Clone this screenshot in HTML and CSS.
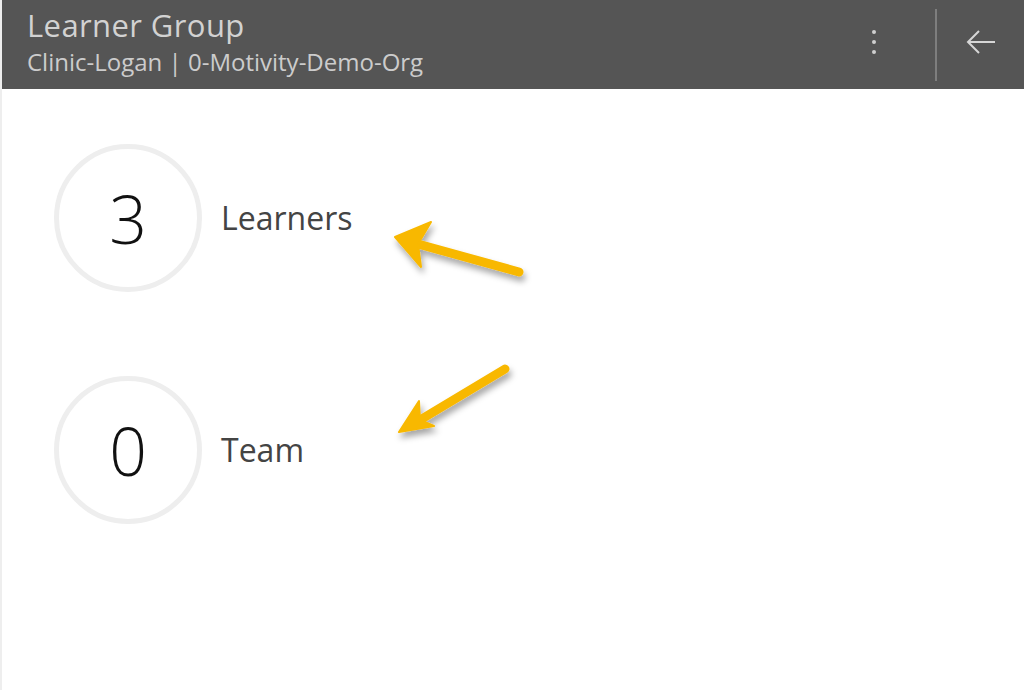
FILE: index.html
```html
<!DOCTYPE html>
<html lang="en">
<head>
    <meta charset="UTF-8">
    <meta name="viewport" content="width=device-width, initial-scale=1.0">
    <title>Learner Group</title>
    <link rel="stylesheet" href="styles.css">
</head>
<body>
    <div class="app">
        <header class="topbar">
            <div class="titles">
                <h1>Learner Group</h1>
                <div class="subtitle">Clinic-Logan | 0-Motivity-Demo-Org</div>
            </div>
            <div class="actions">
                <button class="icon-btn menu" aria-label="More">
                    <svg width="6" height="26" viewBox="0 0 6 26">
                        <circle cx="3" cy="3" r="2" fill="#cfcfcf"/>
                        <circle cx="3" cy="13" r="2" fill="#cfcfcf"/>
                        <circle cx="3" cy="23" r="2" fill="#cfcfcf"/>
                    </svg>
                </button>
                <span class="divider"></span>
                <button class="icon-btn back" aria-label="Back">
                    <svg width="32" height="30" viewBox="0 0 32 30">
                        <path d="M30 15H3M14 4L3 15l11 11" fill="none" stroke="#d6d6d6" stroke-width="2"/>
                    </svg>
                </button>
            </div>
        </header>

        <main class="content">
            <div class="stat">
                <div class="count">3</div>
                <div class="label">Learners</div>
            </div>
            <div class="stat">
                <div class="count">0</div>
                <div class="label">Team</div>
            </div>

            <!-- callout arrows -->
            <svg class="callouts" width="1024" height="600" viewBox="0 0 1024 600">
                <defs>
                    <filter id="drop" x="-20%" y="-20%" width="140%" height="160%">
                        <feDropShadow dx="2" dy="5" stdDeviation="3" flood-color="#000" flood-opacity="0.35"/>
                    </filter>
                </defs>
                <g filter="url(#drop)" fill="#f8b800" stroke="#f8b800" stroke-linecap="round" stroke-linejoin="round">
                    <line x1="519" y1="183" x2="418" y2="155" stroke-width="9"/>
                    <polygon points="395,148 431,133 418,155 421,178" stroke-width="2"/>
                    <line x1="505" y1="280" x2="420" y2="331" stroke-width="9"/>
                    <polygon points="399,343 419,312 420,331 434,337" stroke-width="2"/>
                </g>
            </svg>
        </main>
    </div>
</body>
</html>
```

FILE: styles.css
```css
body {
    margin: 0;
    font-family: "Open Sans", "Noto Sans", Arial, sans-serif;
    background: #fff;
}
.app {
    height: 690px;
    border-left: 2px solid #eeeeee;
    display: flex;
    flex-direction: column;
}
.topbar {
    height: 89px;
    background-color: #555555;
    display: flex;
    justify-content: space-between;
    align-items: flex-start;
}
.titles {
    padding: 5px 0 0 25px;
}
h1 {
    margin: 0;
    font-size: 31px;
    font-weight: 400;
    letter-spacing: 0.4px;
    color: #d2d2d2;
    line-height: 40px;
}
.subtitle {
    font-size: 24px;
    color: #cccccc;
    line-height: 33px;
}
.actions {
    display: flex;
    align-items: center;
    height: 84px;
}
.icon-btn {
    background: none;
    border: none;
    padding: 0;
    display: flex;
    align-items: center;
    justify-content: center;
    cursor: pointer;
}
.menu {
    width: 40px;
    margin-right: 41px;
}
.divider {
    width: 2px;
    height: 72px;
    background: #7e7e7e;
    margin-top: 6px;
}
.back {
    width: 87px;
}
.content {
    position: relative;
    flex: 1;
    padding: 55px 0 0 52px;
    display: flex;
    flex-direction: column;
    gap: 84px;
}
.stat {
    display: flex;
    align-items: center;
    gap: 19px;
}
.count {
    width: 138px;
    height: 138px;
    border: 5px solid #eeeeee;
    border-radius: 50%;
    display: flex;
    align-items: center;
    justify-content: center;
    font-size: 66px;
    font-weight: 300;
    color: #111;
}
.label {
    font-size: 32px;
    color: #444;
    padding-bottom: 2px;
}
.callouts {
    position: absolute;
    left: -2px;
    top: 0;
    pointer-events: none;
}
```
